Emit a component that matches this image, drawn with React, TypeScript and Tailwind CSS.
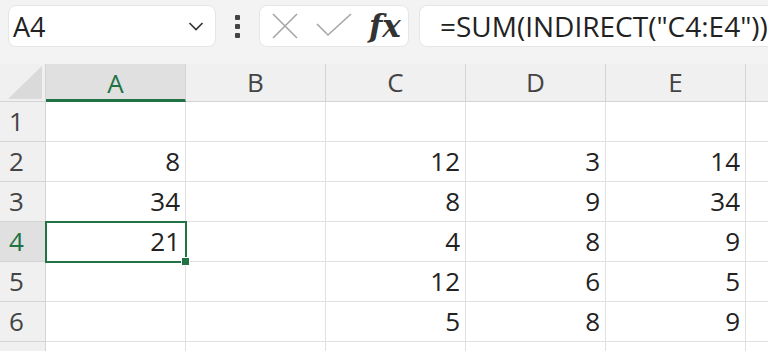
import React from "react";

const cols = ["A", "B", "C", "D", "E"];

const rows: (number | null)[][] = [
  [null, null, null, null, null],
  [8, null, 12, 3, 14],
  [34, null, 8, 9, 34],
  [21, null, 4, 8, 9],
  [null, null, 12, 6, 5],
  [null, null, 5, 8, 9],
  [null, null, null, null, null],
];

const font = { fontFamily: '"Open Sans", "Noto Sans", sans-serif' };

function ChevronDown() {
  return (
    <svg width="18" height="18" viewBox="0 0 18 18" fill="none">
      <path d="M2.5 6l6.5 6.5L15.5 6" stroke="#333" strokeWidth="1.6" />
    </svg>
  );
}

function Toolbar() {
  return (
    <div className="flex h-16 items-start bg-[#f3f3f3] pt-[5px] pl-2">
      {/* name box */}
      <div className="flex h-[42px] w-[208px] items-center justify-between rounded-lg border border-[#e6e6e6] bg-white pl-[4px] pr-[10px]">
        <span className="text-[27px] leading-none text-[#222]">A4</span>
        <ChevronDown />
      </div>

      <div className="flex h-[42px] w-[43px] flex-col items-center justify-center gap-[4px]">
        <span className="h-[5px] w-[5px] rounded-[1px] bg-[#444]" />
        <span className="h-[5px] w-[5px] rounded-[1px] bg-[#444]" />
        <span className="h-[5px] w-[5px] rounded-[1px] bg-[#444]" />
      </div>

      {/* cancel / enter / fx */}
      <div className="flex h-[42px] w-[150px] items-center rounded-lg border border-[#e6e6e6] bg-white pl-[12px]">
        <svg width="26" height="26" viewBox="0 0 26 26">
          <path d="M1 1l24 24M25 1L1 25" stroke="#a6a6a6" strokeWidth="1.6" />
        </svg>
        <svg width="36" height="26" viewBox="0 0 36 26" className="ml-[18px]">
          <path d="M1 11l11 11L35 1" stroke="#a6a6a6" strokeWidth="1.6" fill="none" />
        </svg>
        <span
          className="ml-[17px] text-[31px] font-bold italic leading-none text-[#333]"
          style={{ fontFamily: '"DejaVu Serif", "Liberation Serif", serif' }}
        >
          fx
        </span>
      </div>

      <div className="ml-[10px] flex h-[42px] flex-1 items-center rounded-l-lg border border-r-0 border-[#e6e6e6] bg-white pl-[20px]">
        <span className="whitespace-nowrap text-[28px] leading-none text-[#222]">
          =SUM(INDIRECT("C4:E4"))
        </span>
      </div>
    </div>
  );
}

function Sheet() {
  return (
    <div className="grid grid-cols-[46px_repeat(5,140px)_1fr] grid-rows-[38px_repeat(7,40px)] bg-white">
      {/* corner */}
      <div className="flex items-end justify-end border-b border-r border-[#d4d4d4] bg-[#f0f0f0] pb-[2px] pr-[3px]">
        <svg width="34" height="33" viewBox="0 0 34 33">
          <path d="M34 0V33H0Z" fill="#dadada" />
        </svg>
      </div>
      {cols.map((c) =>
        c === "A" ? (
          <div
            key={c}
            className="flex items-center justify-center border-b-[3px] border-r border-b-[#217346] border-r-[#d4d4d4] bg-[#e0e0e0] pt-[3px] text-[26px] text-[#217346]"
          >
            {c}
          </div>
        ) : (
          <div
            key={c}
            className="flex items-center justify-center border-b border-r border-[#d4d4d4] bg-[#f0f0f0] text-[26px] text-[#444]"
          >
            {c}
          </div>
        )
      )}
      <div className="border-b border-[#d4d4d4] bg-[#f0f0f0]" />

      {rows.map((r, i) => (
        <React.Fragment key={i}>
          <div
            className={
              i === 3
                ? "flex items-center border-b border-r border-[#d4d4d4] bg-[#e0e0e0] pl-[9px] text-[26px] text-[#217346]"
                : "flex items-center border-b border-r border-[#d4d4d4] bg-[#f0f0f0] pl-[9px] text-[26px] text-[#444]"
            }
          >
            {i < 6 ? i + 1 : ""}
          </div>
          {r.map((v, j) => (
            <div
              key={j}
              className="relative flex items-center justify-end border-b border-r border-[#e1e1e1] pr-[5px] text-[26px] text-[#222]"
            >
              {v}
              {i === 3 && j === 0 && (
                <>
                  <div className="pointer-events-none absolute -left-[1px] -top-[1px] z-10 h-[42px] w-[142px] border-2 border-[#217346]" />
                  <div className="absolute -bottom-[4px] -right-[4px] z-20 h-[7px] w-[7px] bg-[#217346] ring-1 ring-white" />
                </>
              )}
            </div>
          ))}
          <div className="border-b border-[#e1e1e1]" />
        </React.Fragment>
      ))}
    </div>
  );
}

export default function App() {
  return (
    <div className="h-[351px] w-[768px] overflow-hidden bg-white" style={font}>
      <Toolbar />
      <Sheet />
    </div>
  );
}
